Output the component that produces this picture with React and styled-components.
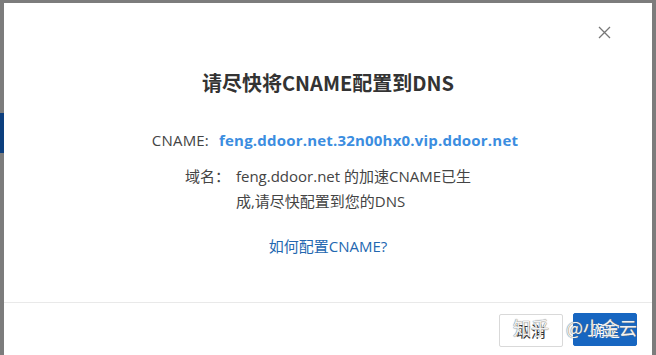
import React from "react";
import styled, { createGlobalStyle } from "styled-components";

const Global = createGlobalStyle`
  html, body { margin: 0; padding: 0; }
  body { font-family: "Open Sans", "Noto Sans CJK SC", sans-serif; }
`;

const Page = styled.div`
  position: relative;
  width: 656px;
  height: 355px;
  overflow: hidden;
  background: #7c7c7c;
`;

const BackSide = styled.div`
  display: flex;
  flex-direction: column;
  padding-top: 113px;
  width: 4px;
`;

const BackTab = styled.div`
  height: 40px;
  background: #0d3f7e;
`;

const Modal = styled.div`
  position: absolute;
  left: 4px;
  top: 3px;
  width: 648px;
  height: 390px;
  background: #fff;
  display: flex;
  flex-direction: column;
`;

const Close = styled.button`
  position: absolute;
  right: 37px;
  top: 18px;
  width: 22px;
  height: 22px;
  border: 0;
  padding: 0;
  background: transparent;
  display: flex;
  align-items: center;
  justify-content: center;
  cursor: pointer;
`;

const Body = styled.div`
  height: 299px;
  display: flex;
  flex-direction: column;
  align-items: center;
  padding-top: 66px;
  box-sizing: border-box;
`;

const Title = styled.h2`
  margin: 0;
  font-size: 20px;
  line-height: 28px;
  font-weight: 700;
  color: #333;
  font-family: "Noto Sans CJK SC", "Open Sans", sans-serif;
`;

const Row = styled.div`
  display: flex;
  align-items: flex-start;
  margin-top: ${p => p.$mt}px;
  font-size: 15px;
  line-height: ${p => p.$lh || 24}px;
  letter-spacing: ${p => p.$ls || 0}px;
  color: #444;
  padding-left: ${p => p.$shift || 0}px;
`;

const Label = styled.span`
  margin-right: ${p => p.$gap}px;
  white-space: nowrap;
`;

const Strong = styled.span`
  color: #3b8de0;
  font-weight: 700;
  white-space: nowrap;
`;

const Lines = styled.div`
  display: flex;
  flex-direction: column;
`;

const Line = styled.span`
  white-space: nowrap;
`;

const HelpLink = styled.a`
  margin-top: 20px;
  font-size: 15px;
  line-height: 24px;
  color: #2367b0;
  text-decoration: none;
  cursor: pointer;
`;

const Footer = styled.div`
  border-top: 1px solid #e9e9e9;
  display: flex;
  justify-content: flex-end;
  gap: 10px;
  padding: 10px 15px 0 0;
`;

const Button = styled.button`
  width: 64px;
  height: 33px;
  box-sizing: border-box;
  border-radius: 2px;
  border: 1px solid ${p => (p.$primary ? "#1766c1" : "#d9d9d9")};
  background: ${p => (p.$primary ? "#1766c1" : "#fff")};
  color: ${p => (p.$primary ? "#fff" : "#333")};
  font-size: 15px;
  font-family: "Noto Sans CJK SC", sans-serif;
  padding: 0;
  margin-top: ${p => (p.$primary ? 0 : 1)}px;
`;

const Watermark = styled.div`
  position: absolute;
  left: 513px;
  top: 314px;
  display: flex;
  gap: 17px;
  font-size: 18px;
  line-height: 26px;
  color: rgba(255, 255, 255, 0.92);
  text-shadow: 0 0 1px #777, 0 0 1px #777;
  font-family: "Noto Sans CJK SC", sans-serif;
  white-space: nowrap;
  pointer-events: none;
`;

export default function App() {
  return (
    <>
      <Global />
      <Page>
        <BackSide>
          <BackTab />
        </BackSide>
        <Modal>
          <Close aria-label="close">
            <svg width="13" height="13" viewBox="0 0 13 13">
              <path d="M1 1 L12 12 M12 1 L1 12" stroke="#777" strokeWidth="1.3" fill="none" />
            </svg>
          </Close>
          <Body>
            <Title>请尽快将CNAME配置到DNS</Title>
            <Row $mt={31} $shift={14} $ls={0.2}>
              <Label $gap={10}>CNAME:</Label>
              <Strong>feng.ddoor.net.32n00hx0.vip.ddoor.net</Strong>
            </Row>
            <Row $mt={12} $lh={25} $shift={0}>
              <Label $gap={6}>域名：</Label>
              <Lines>
                <Line>feng.ddoor.net 的加速CNAME已生</Line>
                <Line>成,请尽快配置到您的DNS</Line>
              </Lines>
            </Row>
            <HelpLink>如何配置CNAME?</HelpLink>
          </Body>
          <Footer>
            <Button>取消</Button>
            <Button $primary>确定</Button>
          </Footer>
        </Modal>
        <Watermark>
          <span>知乎</span>
          <span>@小金云</span>
        </Watermark>
      </Page>
    </>
  );
}
